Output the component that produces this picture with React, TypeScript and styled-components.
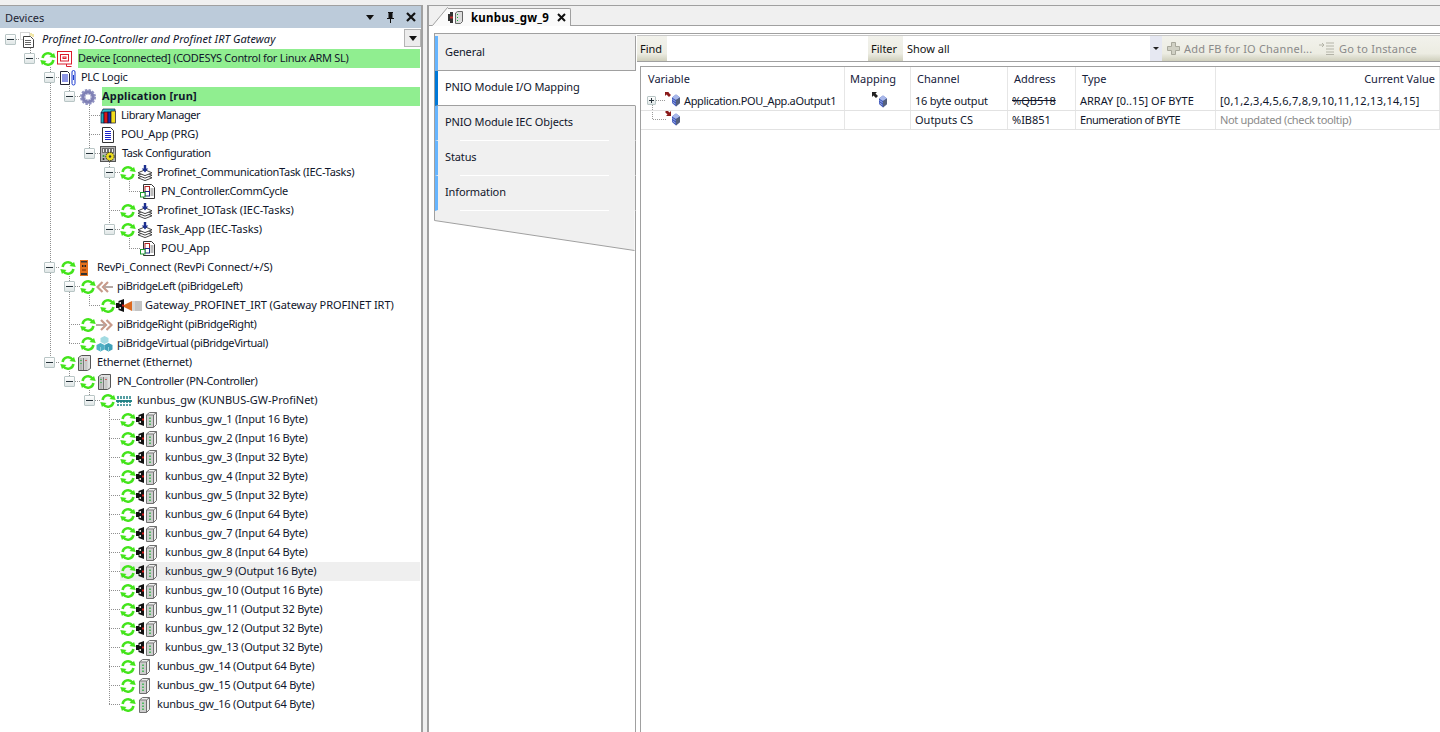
import React from 'react'
import styled, { createGlobalStyle } from 'styled-components'

const GlobalStyle = createGlobalStyle`
  html, body { margin: 0; padding: 0; height: 100%; overflow: hidden; background: #f0f0f0; }
  #root { height: 100%; }
`

const FONT = `'Noto Sans', 'Liberation Sans', sans-serif`
const LINE = '#a0a0a0'

const Page = styled.div`
  display: flex;
  height: 732px;
  padding-top: 5px;
  box-sizing: border-box;
  background: #f0f0f0;
  font-family: ${FONT};
  font-size: 11px;
  color: #10162b;
  overflow: hidden;
`

/* devices panel */
const DevicesPanel = styled.div`
  position: relative;
  width: 423px;
  flex: none;
  display: flex;
  flex-direction: column;
  box-sizing: border-box;
  border-top: 1px solid ${LINE};
  border-right: 2px solid ${LINE};
  background: #fff;
`

const PanelHeader = styled.div`
  height: 22px;
  flex: none;
  display: flex;
  align-items: center;
  padding: 0 0 0 5px;
  background: #bccbda;
  color: #1c2433;
`

const PanelTitle = styled.span`
  flex: 1;
`

const HeaderButton = styled.span`
  width: 20.5px;
  height: 16px;
  display: flex;
  align-items: center;
  justify-content: center;
`

const Tree = styled.div`
  position: relative;
  padding-top: 2px;
  flex: 1;
`

const TreeLines = styled.svg`
  position: absolute;
  left: 0;
  top: 0;
`

const RootCombo = styled.div`
  position: absolute;
  right: 0;
  top: 1px;
  width: 15px;
  height: 16px;
  display: flex;
  align-items: center;
  justify-content: center;
  background: #ececec;
  border: 1px solid #b4b4b4;
`

const Row = styled.div`
  position: relative;
  display: flex;
  height: 19px;
  align-items: center;
`

const Twisty = styled.div<{ $level: number }>`
  flex: none;
  box-sizing: border-box;
  width: ${({ $level }) => 20 + 20 * $level}px;
  padding-left: ${({ $level }) => 4.5 + 19.8 * $level}px;
`

const ExpanderBox = styled.div`
  width: 11px;
  height: 11px;
  box-sizing: border-box;
  border: 1px solid #b9c6c6;
  border-radius: 1px;
  background: linear-gradient(#ffffff, #dfe6e6);
  display: flex;
  align-items: center;
  justify-content: center;
  &::after {
    content: '';
    width: 7px;
    height: 1px;
    background: #26333a;
  }
`

const RowBody = styled.div<{ $selected?: boolean }>`
  flex: 1;
  height: 19px;
  display: flex;
  align-items: center;
  margin-right: 1px;
  background: ${({ $selected }) => ($selected ? '#efefef' : 'transparent')};
`

const IconStrip = styled.div<{ $width: number }>`
  flex: none;
  width: ${({ $width }) => $width}px;
  display: flex;
  align-items: center;
  height: 19px;
`

const Label = styled.div<{ $green?: boolean; $bold?: boolean; $italic?: boolean; $track: number }>`
  flex: 1;
  height: 19px;
  line-height: 18px;
  white-space: nowrap;
  letter-spacing: ${({ $track }) => $track}px;
  background: ${({ $green }) => ($green ? '#90ee90' : 'transparent')};
  font-weight: ${({ $bold }) => ($bold ? 700 : 400)};
  font-style: ${({ $italic }) => ($italic ? 'italic' : 'normal')};
`

/* icons */
const Ico = styled.svg`
  flex: none;
  display: block;
`

const Sync = () => (
  <Ico width="16" height="16" viewBox="0 0 16 16">
    <g fill="none" stroke="#44e41c" strokeWidth="2.5">
      <path d="M2.600 7A5.500 5.500 0 0 1 12.500 4.500" />
      <path d="M13.400 9A5.500 5.500 0 0 1 3.500 11.500" />
    </g>
    <path d="M9.500 6.600h6.300L13.500 2z" fill="#44e41c" transform="rotate(8 13 6)" />
    <path d="M6.500 9.400H.2L2.500 14z" fill="#44e41c" transform="rotate(8 3 10)" />
  </Ico>
)

const RootDoc = () => (
  <Ico width="16" height="16" viewBox="0 0 16 16">
    <rect x="0.5" y="0.5" width="9" height="7" fill="none" stroke="#aaa" strokeDasharray="1 1" />
    <path d="M3.500 4.500h7l3 3v8h-10z" fill="#fff" stroke="#444" />
    <path d="M5 8.500h6M5 10.500h6M5 12.500h6" stroke="#666" />
    <path d="M11 1v3M13 2v3" stroke="#e4cf55" />
  </Ico>
)

const DeviceIco = () => (
  <Ico width="16" height="16" viewBox="0 0 16 16">
    <g fill="none" stroke="#dc1c2c">
      <rect x="0.5" y="0.5" width="14" height="12.5" />
      <rect x="3.500" y="3.500" width="8" height="6.5" />
      <rect x="6" y="6" width="3" height="1.5" />
      <path d="M9.500 13v2.500h5" />
    </g>
  </Ico>
)

const PlcIco = () => (
  <Ico width="16" height="16" viewBox="0 0 16 16">
    <path d="M0.5 1.500h7l2 2v11h-9z" fill="#fff" stroke="#223" />
    <path d="M2 5h6M2 7h6M2 9h6M2 11h6" stroke="#1a2acc" />
    <rect x="12" y="0.5" width="3" height="14.5" rx="1.5" fill="#fff" stroke="#1a3ad0" />
    <path d="M13.500 5v5" stroke="#1a3ad0" />
  </Ico>
)

const Gear = () => (
  <Ico width="16" height="16" viewBox="0 0 16 16">
    <circle cx="8" cy="8" r="5" fill="none" stroke="#7f80b5" strokeWidth="3.4" />
    <circle cx="8" cy="8" r="7" fill="none" stroke="#8e90c0" strokeWidth="2" strokeDasharray="2.4 1.3" />
    <circle cx="8" cy="8" r="3" fill="#fff" stroke="#b8b8d8" />
  </Ico>
)

const Library = () => (
  <Ico width="16" height="16" viewBox="0 0 16 16">
    <path d="M1 5l2-4h12v3z" fill="#2fc0cf" stroke="#113" strokeWidth="0.7" />
    <rect x="1" y="5" width="3" height="10" fill="#1eb0c0" stroke="#113" strokeWidth="0.7" />
    <rect x="4" y="4" width="4" height="11" fill="#dc1515" stroke="#113" strokeWidth="0.7" />
    <rect x="8" y="4" width="3" height="11" fill="#1a2ab0" stroke="#113" strokeWidth="0.7" />
    <rect x="11" y="3" width="4.5" height="12" fill="#f2de1c" stroke="#113" strokeWidth="0.7" />
  </Ico>
)

const PouDoc = () => (
  <Ico width="14" height="16" viewBox="0 0 14 16">
    <path d="M1.500 .5h8l3 3v12h-11z" fill="#fff" stroke="#333" />
    <path d="M4 4.500h6M4 6.500h6M4 8.500h6M4 10.500h6M4 12.500h6" stroke="#1a22cc" />
  </Ico>
)

const TaskCfg = () => (
  <Ico width="16" height="16" viewBox="0 0 16 16">
    <rect x="0.5" y="0.5" width="15" height="15" fill="#b4b4b4" stroke="#555" />
    <path d="M2 2h12v5H2z" fill="#6e6e6e" />
    <path d="M3.500 3v3M6.500 3v3M9.500 3v3M12.500 3v3" stroke="#eee" />
    <circle cx="3.5" cy="10" r="1" fill="#2ba02b" />
    <circle cx="3.5" cy="13" r="1" fill="#222" />
    <circle cx="10" cy="10.5" r="4.2" fill="#eadb1e" stroke="#222" strokeDasharray="1.6 .8" />
    <circle cx="10" cy="10.5" r="1.2" fill="#333" />
  </Ico>
)

const TaskStack = () => (
  <Ico width="16" height="16" viewBox="0 0 16 16">
    <g fill="#fff" stroke="#333" strokeWidth="0.9">
      <path d="M8 9.800l7 3-7 2.800-7-2.800z" />
      <path d="M8 7.300l7 3-7 2.800-7-2.800z" />
      <path d="M8 4.800l7 3-7 2.800-7-2.800z" />
    </g>
    <path d="M6.800 0h2.400v3.500h2L8 7.400 4.800 3.500h2z" fill="#1c2f8f" />
  </Ico>
)

const CycleDoc = () => (
  <Ico width="15" height="16" viewBox="0 0 15 16">
    <path d="M3.500 .5h8l3 3v11h-11z" fill="#fff" stroke="#333" />
    <path d="M10.500 5h3M10.500 7h3M10.500 9h3M10.500 11h3" stroke="#777" />
    <rect x="5" y="2.500" width="4.5" height="5" fill="#fff" stroke="#b02020" />
    <rect x="5" y="7.500" width="4.5" height="4.5" fill="#fff" stroke="#1c2a80" />
    <rect x="0.5" y="8.500" width="4.5" height="4.5" fill="#fff" stroke="#1c9a30" />
  </Ico>
)

const RevPi = () => (
  <Ico width="8" height="16" viewBox="0 0 8 16">
    <rect width="8" height="16" fill="#e2701c" />
    <rect x="1" y="1" width="6" height="1.5" fill="#333" />
    <rect x="2" y="5" width="1.5" height="2" fill="#222" />
    <rect x="4.500" y="5" width="1.5" height="2" fill="#222" />
    <rect x="1" y="13" width="6" height="2" fill="#333" />
    <rect x="2" y="9" width="4" height="2" fill="#a84a10" />
  </Ico>
)

const BridgeArrows = ({ flip }: { flip?: boolean }) => (
  <Ico width="17" height="12" viewBox="0 0 17 12" style={flip ? { transform: 'scaleX(-1)' } : undefined}>
    <path d="M6.500 1L1.500 6l5 5M12 1L7 6l5 5" fill="none" stroke="#c79a8a" strokeWidth="2.2" />
    <path d="M8 6h9" stroke="#b5a8a4" strokeWidth="2" />
  </Ico>
)

const Connector = () => (
  <Ico width="8" height="13" viewBox="0 0 8 13">
    <path d="M0 4h2.500V2L8 0v13l-5.500-2V9H0z" fill="#111" />
    <rect x="3.500" y="3" width="1.5" height="2" fill="#ddd" />
    <rect x="3.500" y="8" width="1.5" height="2" fill="#ddd" />
    <rect x="6" y="5.500" width="2" height="2" fill="#d01818" />
  </Ico>
)

const Cone = () => (
  <Ico width="19" height="12" viewBox="0 0 19 12">
    <path d="M0 5l8-4v10L0 7z" fill="#dc6a20" />
    <rect x="8" y="1" width="10" height="10" fill="#c4c4c4" />
    <rect x="8" y="1" width="3" height="10" fill="#d8d8d8" />
  </Ico>
)

const Cubes = () => (
  <Ico width="17" height="16" viewBox="0 0 17 16">
    <path d="M8.500 0l4 2v4l-4 2-4-2V2z" fill="#a2dbe2" />
    <path d="M4.500 7l4 2v4.500l-4 2-4-2V9z" fill="#4fb0c4" />
    <path d="M12.500 7l4 2v4.500l-4 2-4-2V9z" fill="#3fa0b8" />
    <path d="M4.500 11v4.500M12.500 11v4.500" stroke="#8fd0dc" />
  </Ico>
)

const Module = ({ double }: { double?: boolean }) =>
  double ? (
    <Ico width="13" height="16" viewBox="0 0 13 16">
      <path d="M.5 2.500l3-2h9v13l-3 2h-9z" fill="#e0e0e0" stroke="#555" />
      <rect x="1.500" y="3" width="3" height="12" fill="#b8b8b8" />
      <path d="M3 5v1M3 8v1" stroke="#12b02c" strokeWidth="1.2" />
      <path d="M5.500 3v12" stroke="#777" />
      <rect x="6.500" y="3" width="3" height="12" fill="#c8c8c8" />
      <path d="M8 5v1" stroke="#d02020" strokeWidth="1.2" />
    </Ico>
  ) : (
    <Ico width="11" height="16" viewBox="0 0 11 16">
      <path d="M.5 3L3.500.5h7v12L7.500 15.500h-7z" fill="#f0f0f0" stroke="#707070" />
      <rect x="1" y="3.500" width="6.500" height="11.500" fill="#cdcdcd" />
      <path d="M.5 3h7v12.500M7.500 3l3-2.500" fill="none" stroke="#707070" />
      <path d="M4 5.500v1.500M4 8.500V10M4 11.500V13" stroke="#12b02c" strokeWidth="1.3" />
    </Ico>
  )

const BusComb = () => (
  <Ico width="16" height="10" viewBox="0 0 16 10">
    <path d="M0 5h16" stroke="#2a8a8a" strokeWidth="2" />
    <path d="M2 0v10M5 0v10M8 0v10M11 0v10M14 0v10" stroke="#1f7f84" strokeWidth="1.5" strokeDasharray="3 1" />
  </Ico>
)

const TabGlyph = () => (
  <Ico width="15" height="13" viewBox="0 0 15 13">
    <path d="M0 3h2V1h3v11H2v-2H0z" fill="#333" />
    <rect x="2" y="5.500" width="3" height="2" fill="#c03030" />
    <path d="M7.500 2l2-1.500h5v10l-2 2h-5z" fill="#dedede" stroke="#666" />
    <path d="M9.500 3v1M9.500 6v1M9.500 9v1" stroke="#18b030" />
  </Ico>
)

const MapCube = ({ down, arrow = '#8a1a1a' }: { down?: boolean; arrow?: string }) => (
  <Ico width="16" height="16" viewBox="0 0 16 16">
    <path d={down ? 'M6 6H1L2.500 4.500 0 2 2 0l2.500 2.500L6 1z' : 'M0 0h5L3.500 1.500 6 4 4 6 1.500 3.500 0 5z'} fill={arrow} />
    <path d="M11 3.500l4 3v5.500L11 15.500 7 12V6.500z" fill="#3f58bc" />
    <path d="M11 3.500l4 3L11 9 7 6.500z" fill="#a9b8ea" />
    <path d="M11 9l4-2.500V12l-4 3.500z" fill="#55607c" />
    <path d="M7.500 8.500l3 2M7.500 11l3 2" stroke="#c8d2f2" strokeWidth="0.7" />
  </Ico>
)

const Spacer = styled.span<{ $w: number }>`
  flex: none;
  width: ${({ $w }) => $w}px;
`

type TreeItem = {
  level: number
  text: string
  textX: number
  icons: React.ReactNode
  track?: number
  expand?: boolean
  green?: boolean
  bold?: boolean
  italic?: boolean
  selected?: boolean
}

const gwInput = (n: number, dir: string, size: number, selected?: boolean): TreeItem => ({
  level: 5,
  text: `kunbus_gw_${n} (${dir} ${size} Byte)`,
  textX: 165,
  track: -0.22,
  selected,
  icons: (
    <>
      <Sync />
      <Connector />
      <Spacer $w={2} />
      <Module />
    </>
  ),
})

const gwPlain = (n: number, size: number): TreeItem => ({
  level: 5,
  text: `kunbus_gw_${n} (Output ${size} Byte)`,
  textX: 157,
  track: -0.22,
  icons: (
    <>
      <Sync />
      <Spacer $w={3} />
      <Module />
    </>
  ),
})

const treeItems: TreeItem[] = [
  { level: 0, expand: true, italic: true, text: 'Profinet IO-Controller and Profinet IRT Gateway', textX: 42, track: 0.05, icons: <RootDoc /> },
  { level: 1, expand: true, green: true, text: 'Device [connected] (CODESYS Control for Linux ARM SL)', textX: 78, track: -0.3, icons: <><Sync /><Spacer $w={1} /><DeviceIco /></> },
  { level: 2, expand: true, text: 'PLC Logic', textX: 81, track: -0.33, icons: <PlcIco /> },
  { level: 3, expand: true, green: true, bold: true, text: 'Application [run]', textX: 102, track: 0.18, icons: <Gear /> },
  { level: 4, text: 'Library Manager', textX: 121, track: -0.42, icons: <Library /> },
  { level: 4, text: 'POU_App (PRG)', textX: 121, track: -0.2, icons: <><Spacer $w={1} /><PouDoc /></> },
  { level: 4, expand: true, text: 'Task Configuration', textX: 122, track: -0.45, icons: <TaskCfg /> },
  { level: 5, expand: true, text: 'Profinet_CommunicationTask (IEC-Tasks)', textX: 157, track: -0.29, icons: <><Sync /><Spacer $w={1} /><TaskStack /></> },
  { level: 6, text: 'PN_Controller.CommCycle', textX: 161, track: -0.28, icons: <CycleDoc /> },
  { level: 5, text: 'Profinet_IOTask (IEC-Tasks)', textX: 157, track: -0.04, icons: <><Sync /><Spacer $w={1} /><TaskStack /></> },
  { level: 5, expand: true, text: 'Task_App (IEC-Tasks)', textX: 157, icons: <><Sync /><Spacer $w={1} /><TaskStack /></> },
  { level: 6, text: 'POU_App', textX: 161, icons: <CycleDoc /> },
  { level: 2, expand: true, text: 'RevPi_Connect (RevPi Connect/+/S)', textX: 97, track: -0.1, icons: <><Sync /><Spacer $w={4} /><RevPi /></> },
  { level: 3, expand: true, text: 'piBridgeLeft (piBridgeLeft)', textX: 117, track: -0.42, icons: <><Sync /><BridgeArrows /></> },
  { level: 4, text: 'Gateway_PROFINET_IRT (Gateway PROFINET IRT)', textX: 145, track: -0.07, icons: <><Sync /><Connector /><Cone /></> },
  { level: 3, text: 'piBridgeRight (piBridgeRight)', textX: 117, track: -0.42, icons: <><Sync /><BridgeArrows flip /></> },
  { level: 3, text: 'piBridgeVirtual (piBridgeVirtual)', textX: 117, track: -0.42, icons: <><Sync /><Cubes /></> },
  { level: 2, expand: true, text: 'Ethernet (Ethernet)', textX: 97, track: -0.2, icons: <><Sync /><Spacer $w={2} /><Module double /></> },
  { level: 3, expand: true, text: 'PN_Controller (PN-Controller)', textX: 117, track: -0.38, icons: <><Sync /><Spacer $w={2} /><Module double /></> },
  { level: 4, expand: true, text: 'kunbus_gw (KUNBUS-GW-ProfiNet)', textX: 137, icons: <><Sync /><BusComb /></> },
  gwInput(1, 'Input', 16),
  gwInput(2, 'Input', 16),
  gwInput(3, 'Input', 32),
  gwInput(4, 'Input', 32),
  gwInput(5, 'Input', 32),
  gwInput(6, 'Input', 64),
  gwInput(7, 'Input', 64),
  gwInput(8, 'Input', 64),
  gwInput(9, 'Output', 16, true),
  gwInput(10, 'Output', 16),
  gwInput(11, 'Output', 32),
  gwInput(12, 'Output', 32),
  gwInput(13, 'Output', 32),
  gwPlain(14, 64),
  gwPlain(15, 64),
  gwPlain(16, 64),
]

const ROW_H = 19
const TREE_TOP = 2
const rowMid = (i: number) => TREE_TOP + i * ROW_H + 9
const guideX = (level: number) => Math.round(10 + 19.8 * level)

// dotted connectors: vertical runs start on whole pixels so the dots stay crisp
function treeGuides() {
  const out: string[] = []
  treeItems.forEach((item, i) => {
    const y = rowMid(i)
    const end = 20 + 20 * item.level
    const x = guideX(item.level)
    out.push(`M${x} ${y + 0.5}H${end}`)
    if (item.level === 0) return
    let p = i - 1
    while (treeItems[p].level >= item.level) p--
    out.push(`M${x + 0.5} ${rowMid(p) + 9}V${y}`)
  })
  return out.join(' ')
}

/* content pane */
const ContentPane = styled.div`
  flex: 1;
  margin-left: 4px;
  display: flex;
  flex-direction: column;
  min-width: 0;
  border-top: 1px solid ${LINE};
  border-left: 2px solid ${LINE};
  background: #fff;
`

const TabStrip = styled.div`
  height: 20px;
  flex: none;
  display: flex;
  align-items: flex-end;
  box-sizing: border-box;
  background: #f0f0f0;
  border-bottom: 1px solid ${LINE};
  padding-left: 2px;
`

const TabSlant = styled.svg`
  flex: none;
  display: block;
  margin-bottom: -1px;
`

const Tab = styled.div`
  height: 18px;
  width: 123px;
  box-sizing: border-box;
  margin-bottom: -1px;
  display: flex;
  align-items: center;
  background: #fafafa;
  border-top: 1px solid ${LINE};
  border-right: 1px solid ${LINE};
  border-radius: 0 2px 0 0;
`

const TabTitle = styled.span`
  margin-left: 8px;
  font-weight: 700;
  font-size: 11.5px;
  letter-spacing: 0.2px;
  color: #000;
  flex: 1;
  white-space: nowrap;
`

const TabClose = styled.span`
  margin-right: 4px;
  display: flex;
`

const PaneBody = styled.div`
  flex: 1;
  min-height: 0;
  display: flex;
  padding: 7px 0 0 5px;
`

const NavColumn = styled.div`
  width: 202px;
  flex: none;
  display: flex;
  flex-direction: column;
`

const NavList = styled.div`
  display: flex;
  flex-direction: column;
  border-top: 1px solid ${LINE};
  border-left: 1px solid ${LINE};
  padding-top: 2px;
  background: #f0f0f0;
`

const NavItem = styled.div<{ $active?: boolean; $ruled?: boolean }>`
  position: relative;
  height: 35px;
  box-sizing: border-box;
  display: flex;
  align-items: center;
  padding: 0 0 3px 7px;
  border-left: 3px solid ${({ $active }) => ($active ? '#0078d7' : '#66b5ff')};
  background: ${({ $active }) => ($active ? '#fff' : '#f0f0f0')};
  border-right: ${({ $active }) => ($active ? '1px solid #fff' : `1px solid ${LINE}`)};
  border-bottom: 1px solid ${({ $ruled }) => ($ruled ? '#fff' : LINE)};
  letter-spacing: -0.13px;
  white-space: nowrap;
  ${({ $ruled }) =>
    $ruled &&
    `
    border-bottom-color: transparent;
    &::after {
      content: '';
      position: absolute;
      left: 22px;
      width: 149px;
      bottom: -1px;
      height: 1px;
      background: #fff;
    }
  `}
`

const NavFoot = styled.svg`
  flex: none;
  display: block;
`

const NavRest = styled.div`
  flex: 1;
  margin-right: 0;
  border-right: 1px solid ${LINE};
`

const Main = styled.div`
  flex: 1;
  min-width: 0;
  display: flex;
  flex-direction: column;
  border-top: 1px solid ${LINE};
`

const Toolbar = styled.div`
  height: 27px;
  flex: none;
  margin-top: 1px;
  margin-left: 1px;
  display: flex;
  box-sizing: border-box;
  border-top: 1px solid #c8c8c8;
  border-bottom: 1px solid ${LINE};
`

const ToolLabel = styled.div<{ $w: number }>`
  flex: none;
  width: ${({ $w }) => $w}px;
  box-sizing: border-box;
  padding-left: 3px;
  display: flex;
  align-items: center;
  background: linear-gradient(#f2f2ec, #ecece2 70%, #cfcfbc);
  color: #111;
`

const ToolInput = styled.div<{ $w: number }>`
  flex: none;
  width: ${({ $w }) => $w}px;
  box-sizing: border-box;
  padding-left: 4px;
  display: flex;
  align-items: center;
  color: #111;
`

const DropTick = styled.div`
  flex: none;
  width: 12px;
  display: flex;
  align-items: center;
  justify-content: center;
  background: #e6e8f2;
`

const ToolActions = styled.div`
  flex: 1;
  display: flex;
  align-items: center;
  padding-left: 5px;
  background: linear-gradient(#f2f2ec, #ecece2 70%, #cfcfbc);
  color: #8a8a8a;
  white-space: nowrap;
  letter-spacing: 0.2px;
`

const ToolAction = styled.span<{ $w: number }>`
  flex: none;
  width: ${({ $w }) => $w}px;
  display: flex;
  align-items: center;
  gap: 4px;
`

const TableWrap = styled.div`
  flex: 1;
  margin-top: 4px;
  margin-left: 4px;
  border-top: 1px solid ${LINE};
  border-left: 1px solid ${LINE};
`

const COLUMNS = '204px 66px 97px 68px 140px 1fr'

const HeaderRow = styled.div`
  display: grid;
  grid-template-columns: ${COLUMNS};
  height: 25px;
`

const HeadCell = styled.div<{ $align?: string; $pad?: number }>`
  display: flex;
  align-items: center;
  padding: 0 4px 2px ${({ $pad }) => $pad ?? 6}px;
  justify-content: ${({ $align }) => $align || 'flex-start'};
  border-right: 1px solid #e6e6e6;
  color: #15203a;
  white-space: nowrap;
`

const DataRow = styled.div`
  display: grid;
  grid-template-columns: ${COLUMNS};
  height: 19px;
  box-sizing: border-box;
  border-bottom: 1px solid #e2e2e2;
`

const Cell = styled.div<{ $muted?: boolean; $center?: boolean; $struck?: boolean; $track?: number }>`
  display: flex;
  align-items: center;
  padding-left: 4px;
  padding-bottom: 2px;
  letter-spacing: ${({ $track }) => $track ?? 0}px;
  justify-content: ${({ $center }) => ($center ? 'center' : 'flex-start')};
  border-right: 1px solid #e6e6e6;
  color: ${({ $muted }) => ($muted ? '#8a8a8a' : '#10162b')};
  text-decoration: ${({ $struck }) => ($struck ? 'line-through' : 'none')};
  white-space: nowrap;
  overflow: hidden;
`

const VarTree = styled.div`
  position: relative;
  flex: none;
  width: 39px;
  height: 18px;
  display: flex;
  align-items: center;
`

const PlusBox = styled(ExpanderBox)`
  width: 9px;
  height: 9px;
  position: relative;
  margin-left: 2px;
  &::after {
    width: 5px;
  }
  &::before {
    content: '';
    position: absolute;
    left: 3px;
    top: 1px;
    width: 1px;
    height: 5px;
    background: #26333a;
  }
`

const VarGuides = styled.svg`
  position: absolute;
  left: 0;
  top: 0;
`

const VarIcon = styled.span`
  position: absolute;
  left: 20px;
  top: 0;
  display: flex;
`

export default function App() {
  const treeHeight = TREE_TOP + treeItems.length * ROW_H
  return (
    <>
      <GlobalStyle />
      <Page>
        <DevicesPanel>
          <PanelHeader>
            <PanelTitle>Devices</PanelTitle>
            <HeaderButton>
              <svg width="8" height="5" viewBox="0 0 8 5"><path d="M0 0h8L4 5z" fill="#111" /></svg>
            </HeaderButton>
            <HeaderButton>
              <svg width="9" height="11" viewBox="0 0 9 11"><path d="M2 0h5v1H6.500v5H8v1H5v4H4V7H1V6h1.500V1H2z" fill="#111" /></svg>
            </HeaderButton>
            <HeaderButton>
              <svg width="10" height="10" viewBox="0 0 10 10"><path d="M1 1l8 8M9 1L1 9" stroke="#111" strokeWidth="2.2" /></svg>
            </HeaderButton>
          </PanelHeader>
          <Tree>
            <TreeLines width="421" height={treeHeight}>
              <path d={treeGuides()} fill="none" stroke="#8f8f8f" strokeDasharray="1 1" />
            </TreeLines>
            {treeItems.map((item, i) => (
              <Row key={i}>
                <Twisty $level={item.level}>{item.expand && <ExpanderBox />}</Twisty>
                <RowBody $selected={item.selected}>
                  <IconStrip $width={item.textX - (20 + 20 * item.level)}>{item.icons}</IconStrip>
                  <Label $green={item.green} $bold={item.bold} $italic={item.italic} $track={item.track ?? 0}>
                    {item.text}
                  </Label>
                </RowBody>
              </Row>
            ))}
            <RootCombo>
              <svg width="8" height="5" viewBox="0 0 8 5"><path d="M0 0h8L4 5z" fill="#111" /></svg>
            </RootCombo>
          </Tree>
        </DevicesPanel>

        <ContentPane>
          <TabStrip>
            <TabSlant width="17" height="19" viewBox="0 0 17 19">
              <path d="M0 18.500h1L16.500 .5H17V19H0z" fill="#fafafa" />
              <path d="M0 18.500h1.500L16.500 .5H17" fill="none" stroke={LINE} />
            </TabSlant>
            <Tab>
              <TabGlyph />
              <TabTitle>kunbus_gw_9</TabTitle>
              <TabClose>
                <svg width="9" height="9" viewBox="0 0 9 9"><path d="M1 1l7 7M8 1L1 8" stroke="#111" strokeWidth="2" /></svg>
              </TabClose>
            </Tab>
          </TabStrip>
          <PaneBody>
            <NavColumn>
              <NavList>
                <NavItem>General</NavItem>
                <NavItem $active>PNIO Module I/O Mapping</NavItem>
                <NavItem $ruled>PNIO Module IEC Objects</NavItem>
                <NavItem $ruled>Status</NavItem>
                <NavItem $ruled>Information</NavItem>
              </NavList>
              <NavFoot width="202" height="40" viewBox="0 0 202 40">
                <path d="M.5 0V9.500L200.500 39.500V0z" fill="#f0f0f0" />
                <path d="M.5 0V9.500L200.500 39.500" fill="none" stroke={LINE} />
                <path d="M201.500 0V40" stroke={LINE} />
              </NavFoot>
              <NavRest />
            </NavColumn>
            <Main>
              <Toolbar>
                <ToolLabel $w={30}>Find</ToolLabel>
                <ToolInput $w={201} />
                <ToolLabel $w={35}>Filter</ToolLabel>
                <ToolInput $w={247}>Show all</ToolInput>
                <DropTick>
                  <svg width="6" height="3" viewBox="0 0 6 3"><path d="M0 0h6L3 3z" fill="#222" /></svg>
                </DropTick>
                <ToolActions>
                  <ToolAction $w={152}>
                    <svg width="13" height="13" viewBox="0 0 13 13"><path d="M4.500 .5h4v4h4v4h-4v4h-4v-4h-4v-4h4z" fill="#d0d0c4" stroke="#a8a89c" /></svg>
                    Add FB for IO Channel...
                  </ToolAction>
                  <ToolAction $w={100}>
                    <svg width="16" height="13" viewBox="0 0 16 13"><path d="M0 3h4M3 1l2 2-2 2M7 1h8M7 4h8M7 7h8M7 10h8M7 12.500h8" stroke="#b4b4a8" fill="none" /></svg>
                    Go to Instance
                  </ToolAction>
                </ToolActions>
              </Toolbar>
              <TableWrap>
                <HeaderRow>
                  <HeadCell $pad={7}>Variable</HeadCell>
                  <HeadCell $pad={5}>Mapping</HeadCell>
                  <HeadCell>Channel</HeadCell>
                  <HeadCell>Address</HeadCell>
                  <HeadCell>Type</HeadCell>
                  <HeadCell $align="flex-end">Current Value</HeadCell>
                </HeaderRow>
                <DataRow>
                  <Cell $track={-0.35}>
                    <VarTree>
                      <VarGuides width="39" height="19">
                        <path d="M11 9.500H21M7.500 14V19" fill="none" stroke="#9a9a9a" strokeDasharray="1 1" />
                      </VarGuides>
                      <PlusBox />
                      <VarIcon><MapCube /></VarIcon>
                    </VarTree>
                    <span>Application.POU_App.aOutput1</span>
                  </Cell>
                  <Cell $center><MapCube arrow="#222" /></Cell>
                  <Cell $track={-0.2}>16 byte output</Cell>
                  <Cell $struck>%QB518</Cell>
                  <Cell>ARRAY [0..15] OF BYTE</Cell>
                  <Cell $track={0.25}>[0,1,2,3,4,5,6,7,8,9,10,11,12,13,14,15]</Cell>
                </DataRow>
                <DataRow>
                  <Cell>
                    <VarTree>
                      <VarGuides width="39" height="19">
                        <path d="M7.500 0V9.500H21" fill="none" stroke="#9a9a9a" strokeDasharray="1 1" />
                      </VarGuides>
                      <VarIcon><MapCube down /></VarIcon>
                    </VarTree>
                  </Cell>
                  <Cell />
                  <Cell>Outputs CS</Cell>
                  <Cell>%IB851</Cell>
                  <Cell $track={-0.45}>Enumeration of BYTE</Cell>
                  <Cell $muted $track={-0.35}>Not updated (check tooltip)</Cell>
                </DataRow>
              </TableWrap>
            </Main>
          </PaneBody>
        </ContentPane>
      </Page>
    </>
  )
}
